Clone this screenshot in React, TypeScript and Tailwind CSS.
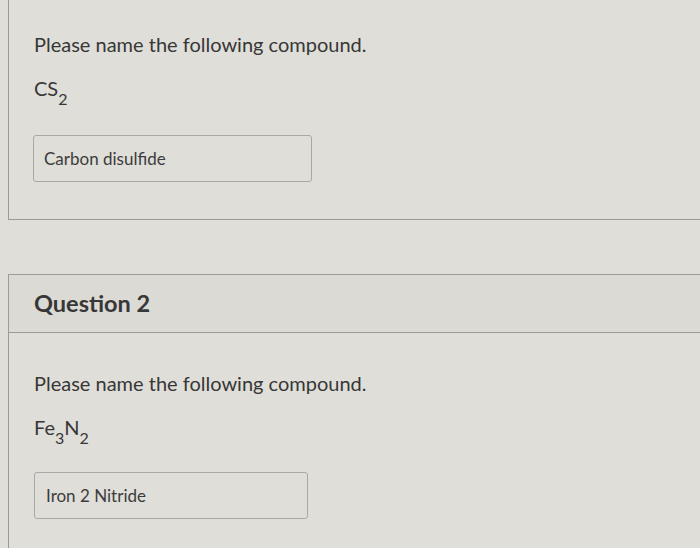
export default function App() {
  return (
    <div className="w-[700px] h-[548px] overflow-hidden bg-[#dfded9] font-['Lato','Liberation_Sans',sans-serif] text-[#373737]">
      {/* question 1 (scrolled) */}
      <div className="ml-[8px] h-[220px] border-l border-b border-[#9c9b97] pl-[25px] pt-[30px]">
        <p className="text-[20px] leading-[28px]">Please name the following compound.</p>
        <p className="mt-[16px] h-[28px] text-[20px] leading-[28px]">
          CS<sub className="text-[16px] align-[-5px] leading-none">2</sub>
        </p>
        <div className="-ml-px mt-[33px] flex h-[47px] w-[279px] items-center rounded-[3px] border border-[#a9a8a4] px-[10px] text-[17px] text-[#3c3c3c]">
          Carbon disulfide
        </div>
      </div>

      {/* question 2 */}
      <div className="ml-[8px] mt-[54px] border-l border-t border-[#9c9b97]">
        <div className="flex h-[58px] items-center border-b border-[#9c9b97] bg-[#dbdad5] pl-[25px]">
          <h2 className="text-[23.5px] font-bold">Question 2</h2>
        </div>
        <div className="pl-[25px] pt-[36px]">
          <p className="text-[20px] leading-[28px]">Please name the following compound.</p>
          <p className="mt-[16px] h-[28px] text-[20px] leading-[28px]">
            Fe<sub className="text-[16px] align-[-5px] leading-none">3</sub>N<sub className="text-[16px] align-[-5px] leading-none">2</sub>
          </p>
          <div className="mt-[31px] flex h-[47px] w-[274px] items-center rounded-[3px] border border-[#a9a8a4] px-[11px] text-[17px] text-[#3c3c3c]">
            Iron 2 Nitride
          </div>
          <div className="h-[40px]" />
        </div>
      </div>
    </div>
  );
}
